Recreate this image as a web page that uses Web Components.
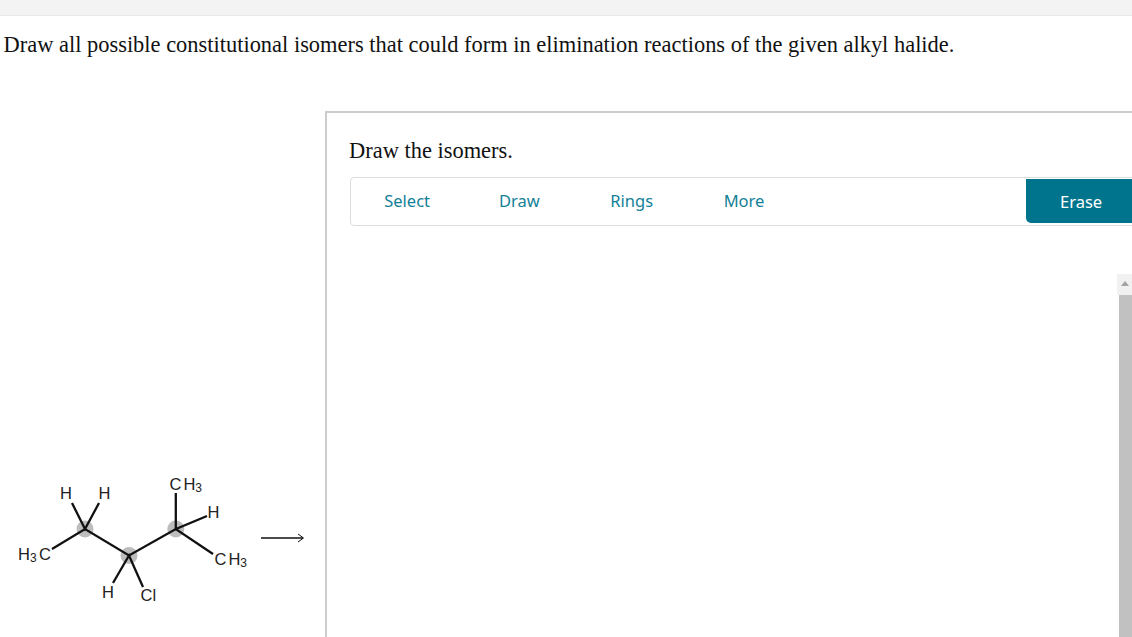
<!DOCTYPE html>
<html><head><meta charset="utf-8"><style>
html,body{margin:0;padding:0;height:637px;overflow:hidden;background:#fff}
</style></head><body>
<quiz-page>
  <span slot="question">Draw all possible constitutional isomers that could form in elimination reactions of the given alkyl halide.</span>
  <reaction-figure slot="figure"></reaction-figure>
  <draw-panel slot="panel" prompt="Draw the isomers."></draw-panel>
</quiz-page>
<template id="t-page"><style>
:host{display:flex;flex-direction:column;width:1132px;height:637px;overflow:hidden;font-family:"Liberation Serif",serif;color:#111}
.bar{height:15px;background:#f3f3f3;border-bottom:1px solid #e8e8e8;flex:none}
.q{font-size:22.45px;line-height:26px;padding:16px 0 0 3.5px;height:53px;white-space:nowrap;flex:none}
.main{display:flex;flex:1;min-height:0;padding-top:26px}
.left{width:325px;flex:none;display:flex;align-items:flex-end}
.right{flex:none;width:820px}
</style><div class="bar"></div><div class="q"><slot name="question"></slot></div><div class="main"><div class="left"><slot name="figure"></slot></div><div class="right"><slot name="panel"></slot></div></div></template>
<template id="t-fig"><style>
:host{display:block;width:325px;height:177px}
svg{display:block}
text{font-family:"Liberation Sans",Arial,sans-serif;font-size:16.5px;fill:#222}
.s{font-size:12px}
.b{stroke:#111;stroke-width:2.3;stroke-linecap:butt;fill:none}
</style><svg width="325" height="177" viewBox="0 460 325 177">
<g fill="#bdbdbd"><circle cx="85" cy="529" r="8.5"/><circle cx="129" cy="555.5" r="8.5"/><circle cx="175.8" cy="529" r="8.5"/></g>
<g class="b"><path d="M52 549 85 529 129 555.5 175.8 529 213 554"/><path d="M72 503 85 529 99 503"/><path d="M113 583 129 555.5 143 587"/><path d="M175.8 493V529L207 516"/></g>
<path d="M261 538H303" stroke="#111" stroke-width="1.6"/><path d="M298 534 303.5 538 298 542" stroke="#111" fill="none"/>
<text x="18" y="560">H<tspan class="s" dy="2">3</tspan><tspan dy="-2" dx="2.5">C</tspan></text>
<text x="60" y="499">H</text><text x="98.5" y="499">H</text>
<text x="169.5" y="490">C<tspan dx="2">H</tspan><tspan class="s" dy="2">3</tspan></text>
<text x="207.5" y="518">H</text>
<text x="214.5" y="564.5">C<tspan dx="2">H</tspan><tspan class="s" dy="2">3</tspan></text>
<text x="102" y="597.5">H</text><text x="140.5" y="601">Cl</text>
</svg></template>
<template id="t-panel"><style>
:host{display:flex;flex-direction:column;box-sizing:border-box;height:526px;border:solid #ccc;border-width:2px 0 0 2px;font-family:"Liberation Serif",serif;position:relative}
.p{font-size:22.45px;line-height:26px;padding:25px 0 0 22px;height:39px;color:#111}
.t{margin:0 0 0 23px}
.c{flex:1;display:flex;justify-content:flex-end;padding:48px 13px 0 0;min-height:0}
</style><div class="p" id="p"></div><div class="t"><tool-bar></tool-bar></div><div class="c"><fake-scroll></fake-scroll></div></template>
<template id="t-bar"><style>
:host{display:flex;box-sizing:border-box;height:49px;width:800px;border:1px solid #ddd;border-radius:4px;font-family:"Noto Sans","Open Sans",sans-serif;font-size:16.5px;color:#137f98;align-items:stretch}
.i{width:112.3px;display:flex;align-items:center;justify-content:center;padding-bottom:3px;box-sizing:border-box}
.i:first-child{margin-left:1.5px}
.sp{flex:1}
.e{width:123px;margin:1px 0 2px;background:#00748c;color:#fff;border-radius:0 0 0 5px;display:flex;align-items:center;padding-left:34px;box-sizing:border-box}
</style><div class="i">Select</div><div class="i">Draw</div><div class="i">Rings</div><div class="i">More</div><div class="sp"></div><div class="e">Erase</div></template>
<template id="t-scroll"><style>
:host{display:flex;flex-direction:column;width:15px;height:100%;flex:none}
.u{height:21px;background:#f1f1f1;display:flex;justify-content:center;padding-top:7px;box-sizing:border-box}
.a{width:0;height:0;border:4.5px solid transparent;border-top:0;border-bottom:5px solid #a3a3a3}
.th{flex:1;background:#c1c1c1;margin-left:2px}
</style><div class="u"><div class="a"></div></div><div class="th"></div></template>
<script>
function mk(name,tid,init){customElements.define(name,class extends HTMLElement{constructor(){super();const r=this.attachShadow({mode:"open"});r.appendChild(document.getElementById(tid).content.cloneNode(true));}connectedCallback(){if(init)init(this)}});}
mk("quiz-page","t-page");
mk("reaction-figure","t-fig");
mk("tool-bar","t-bar");
mk("fake-scroll","t-scroll");
mk("draw-panel","t-panel",e=>{e.shadowRoot.getElementById("p").textContent=e.getAttribute("prompt")});
</script>
</body></html>
